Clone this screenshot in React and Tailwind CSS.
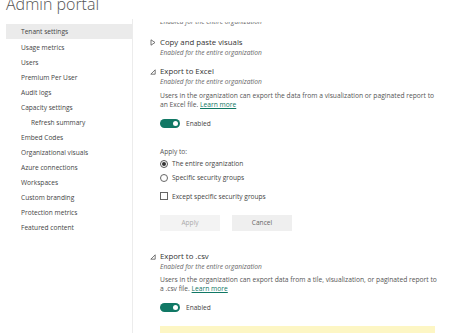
import React from 'react';

const navItems = [
  { label: 'Tenant settings', active: true },
  { label: 'Usage metrics' },
  { label: 'Users' },
  { label: 'Premium Per User' },
  { label: 'Audit logs' },
  { label: 'Capacity settings' },
  { label: 'Refresh summary', sub: true },
  { label: 'Embed Codes' },
  { label: 'Organizational visuals' },
  { label: 'Azure connections' },
  { label: 'Workspaces' },
  { label: 'Custom branding' },
  { label: 'Protection metrics' },
  { label: 'Featured content' },
];

const Collapsed = () => (
  <svg width="6" height="7" viewBox="0 0 6 7" className="shrink-0">
    <path d="M1 0.8 L5 3.5 L1 6.2 Z" fill="none" stroke="#555" strokeWidth="0.8" />
  </svg>
);

const Expanded = () => (
  <svg width="6" height="6" viewBox="0 0 6 6" className="shrink-0">
    <path d="M5.2 0.8 L5.2 5.2 L0.8 5.2 Z" fill="none" stroke="#555" strokeWidth="0.8" />
  </svg>
);

const Toggle = () => (
  <div className="flex items-center gap-[6px] h-[9px]">
    <div className="w-[20px] h-[9px] rounded-full bg-[#117865] flex items-center justify-end pr-[2px]">
      <div className="w-[5px] h-[5px] rounded-full bg-white" />
    </div>
    <span className="text-[6.6px] leading-[9px] text-[#444]">Enabled</span>
  </div>
);

const SectionHead = ({ title, open }) => (
  <div>
    <div className="flex items-center h-[11px]">
      <div className="w-[10px] flex justify-start">{open ? <Expanded /> : <Collapsed />}</div>
      <span className="text-[7.8px] leading-[11px] text-[#333]">{title}</span>
    </div>
    <div className="pl-[10px] text-[6.6px] italic text-[#666] leading-[9px]">
      Enabled for the entire organization
    </div>
  </div>
);

const App = () => {
  return (
    <div
      className="w-[474px] h-[333px] overflow-hidden bg-white text-[#333]"
      style={{ fontFamily: '"Open Sans", "Noto Sans", sans-serif' }}
    >
      {/* Header */}
      <div className="h-[19px] overflow-hidden">
        <div className="pl-[6px] -mt-[7px] text-[16px] font-light text-[#555] leading-[22px]">
          Admin portal
        </div>
      </div>

      <div className="flex h-[314px]">
        {/* Sidebar */}
        <div className="w-[133px] shrink-0 border-r border-[#ececec] pt-[5px] pl-[6px]">
          {navItems.map((item) => (
            <div
              key={item.label}
              className={`h-[15px] flex items-center text-[6.6px] text-[#444] ${
                item.sub ? 'pl-[25px]' : 'pl-[15px]'
              } ${item.active ? 'bg-[#ebebeb] h-[14px] mb-[1px]' : ''}`}
            >
              {item.label}
            </div>
          ))}
        </div>

        {/* Main content */}
        <div className="flex-1 mt-[3px] overflow-hidden pl-[17px]">
          <div className="-mt-[5px] pl-[10px] text-[6.6px] italic text-[#666] leading-[9px]">
            Enabled for the entire organization
          </div>

          <div className="mt-[11px]">
            <SectionHead title="Copy and paste visuals" />
          </div>

          <div className="mt-[9px]">
            <SectionHead title="Export to Excel" open />
            <div className="pl-[10px]">
              <p className="mt-[6px] text-[6.7px] leading-[8.5px] text-[#555] w-[278px]">
                Users in the organization can export the data from a visualization or paginated report to an
                Excel file. <span className="text-[#117865] underline">Learn more</span>
              </p>
              <div className="mt-[10px]">
                <Toggle />
              </div>
              <div className="mt-[19px] text-[6.6px] leading-[9px] text-[#555]">Apply to:</div>
              <div className="mt-[3px] flex items-center gap-[4px] h-[9px]">
                <div className="w-[8px] h-[8px] rounded-full border border-[#555] flex items-center justify-center">
                  <div className="w-[4px] h-[4px] rounded-full bg-[#333]" />
                </div>
                <span className="text-[6.6px] leading-[9px] text-[#444]">The entire organization</span>
              </div>
              <div className="mt-[5px] flex items-center gap-[4px] h-[9px]">
                <div className="w-[8px] h-[8px] rounded-full border border-[#666]" />
                <span className="text-[6.6px] leading-[9px] text-[#444]">Specific security groups</span>
              </div>
              <div className="mt-[10px] flex items-center gap-[4px] h-[8px]">
                <div className="w-[8px] h-[8px] border border-[#666]" />
                <span className="text-[6.6px] leading-[9px] text-[#444]">Except specific security groups</span>
              </div>
              <div className="mt-[15px] flex gap-[12px]">
                <div className="w-[60px] h-[16px] bg-[#f3f3f3] flex items-center justify-center text-[6.6px] text-[#aaa]">
                  Apply
                </div>
                <div className="w-[60px] h-[16px] bg-[#efefef] flex items-center justify-center text-[6.6px] text-[#666]">
                  Cancel
                </div>
              </div>
            </div>
          </div>

          <div className="mt-[20px]">
            <SectionHead title="Export to .csv" open />
            <div className="pl-[10px]">
              <p className="mt-[5px] text-[6.7px] leading-[8.5px] text-[#555] w-[278px]">
                Users in the organization can export data from a tile, visualization, or paginated report to a
                .csv file. <span className="text-[#117865] underline">Learn more</span>
              </p>
              <div className="mt-[10px]">
                <Toggle />
              </div>
              <div className="mt-[14px] h-[10px] w-[275px] bg-[#fdf6c4]" />
            </div>
          </div>
        </div>
      </div>
    </div>
  );
};

export default App;
